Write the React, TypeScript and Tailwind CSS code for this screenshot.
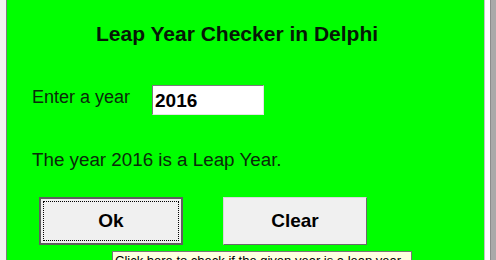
export default function App() {
  return (
    <div className="relative flex h-[260px] w-[496px] overflow-hidden bg-white font-['Liberation_Sans',Arial,sans-serif]">
      {/* left window edge */}
      <div className="w-[6px] shrink-0 bg-[#f3f3f3]" />
      <div className="w-px shrink-0 bg-[#7d7d7d]" />

      {/* form */}
      <div className="flex w-[477px] shrink-0 flex-col bg-[#00ff00]">
        <h1 className="pl-[89px] pt-[23px] text-[21px] font-bold leading-none text-[#061806]">
          Leap Year Checker in Delphi
        </h1>

        <div className="mt-[41px] flex items-start pl-[25px]">
          <span className="mt-[3px] w-[120px] text-[18px] leading-none text-[#0a2a0a]">Enter a year</span>
          <div className="flex h-[30px] w-[112px] items-center border border-t-[#7a7a7a] border-l-[#7a7a7a] border-b-[#e4e4e4] border-r-[#e4e4e4] bg-white pl-[2px]">
            <span className="text-[19px] font-bold leading-none text-black">2016</span>
          </div>
        </div>

        <p className="mt-[36px] pl-[25px] text-[18.8px] leading-none text-[#0a2a0a]">
          The year 2016 is a Leap Year.
        </p>

        <div className="mt-[27px] flex gap-[40px] pl-[32px]">
          <button className="flex h-[48px] w-[144px] items-center justify-center border-2 border-[#5f5f5f] bg-[#f0f0f0] p-[2px]">
            <span className="flex h-full w-full items-center justify-center border border-dotted border-black text-[19px] font-bold leading-none text-black">
              Ok
            </span>
          </button>
          <button className="flex h-[48px] w-[144px] items-center justify-center border border-t-[#d8d8d8] border-l-[#d8d8d8] border-b-[#6a6a6a] border-r-[#6a6a6a] bg-[#f0f0f0] text-[19px] font-bold leading-none text-black">
            Clear
          </button>
        </div>
      </div>

      {/* right window edge */}
      <div className="w-px shrink-0 bg-[#c4c4c4]" />
      <div className="w-[5px] shrink-0 bg-white" />
      <div className="w-px shrink-0 bg-[#8c8c8c]" />
      <div className="flex-1 bg-[#a9a9a9]" />

      {/* tooltip */}
      <div className="absolute left-[112px] top-[251px] w-[300px] overflow-hidden border border-[#767676] bg-[#ffffe1] px-[2px] pt-[2px] pb-[4px] text-[13px] leading-none whitespace-nowrap text-black">
        Click here to check if the given year is a leap year
      </div>
    </div>
  );
}
